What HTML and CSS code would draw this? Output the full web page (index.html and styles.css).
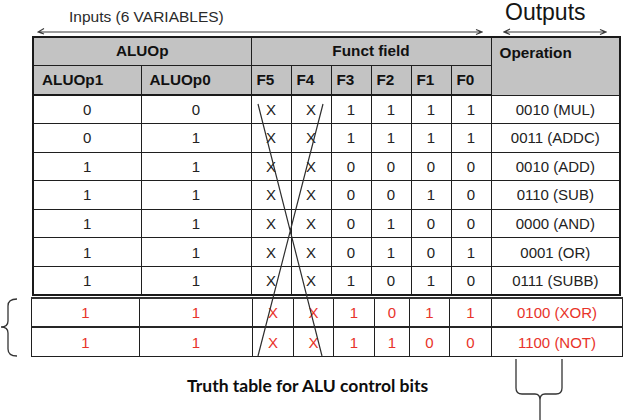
FILE: index.html
```html
<!DOCTYPE html>
<html>
<head>
<meta charset="utf-8">
<title>Truth table for ALU control bits</title>
<link rel="stylesheet" href="styles.css">
</head>
<body>
<div class="top">
  <div class="inputs">
    <div class="inputs-label">Inputs (6 VARIABLES)</div>
    <svg class="arrow" viewBox="0 0 446 10" preserveAspectRatio="none">
      <path d="M1 6H445M7 2.5L1 6L7 8M439 3.5L445 6L439 8.5" />
    </svg>
  </div>
  <div class="outputs">
    <div class="outputs-label">Outputs</div>
    <svg class="arrow" viewBox="0 0 104 10" preserveAspectRatio="none">
      <path d="M1 6H103M7 3L1 6L7 8.5M97 3.5L103 6L97 8.5" />
    </svg>
  </div>
</div>

<table class="truth main">
  <colgroup>
    <col class="w-a"><col class="w-b">
    <col class="w-f"><col class="w-f"><col class="w-f"><col class="w-f"><col class="w-f"><col class="w-f">
    <col class="w-op">
  </colgroup>
  <thead>
    <tr class="h1">
      <th colspan="2" class="center">ALUOp</th>
      <th colspan="6" class="center">Funct field</th>
      <th rowspan="2" class="op-head">Operation</th>
    </tr>
    <tr class="h2">
      <th>ALUOp1</th><th>ALUOp0</th>
      <th>F5</th><th>F4</th><th>F3</th><th>F2</th><th>F1</th><th>F0</th>
    </tr>
  </thead>
  <tbody>
    <tr><td>0</td><td>0</td><td>X</td><td>X</td><td>1</td><td>1</td><td>1</td><td>1</td><td>0010 (MUL)</td></tr>
    <tr><td>0</td><td>1</td><td>X</td><td>X</td><td>1</td><td>1</td><td>1</td><td>1</td><td>0011 (ADDC)</td></tr>
    <tr><td>1</td><td>1</td><td>X</td><td>X</td><td>0</td><td>0</td><td>0</td><td>0</td><td>0010 (ADD)</td></tr>
    <tr><td>1</td><td>1</td><td>X</td><td>X</td><td>0</td><td>0</td><td>1</td><td>0</td><td>0110 (SUB)</td></tr>
    <tr><td>1</td><td>1</td><td>X</td><td>X</td><td>0</td><td>1</td><td>0</td><td>0</td><td>0000 (AND)</td></tr>
    <tr><td>1</td><td>1</td><td>X</td><td>X</td><td>0</td><td>1</td><td>0</td><td>1</td><td>0001 (OR)</td></tr>
    <tr><td>1</td><td>1</td><td>X</td><td>X</td><td>1</td><td>0</td><td>1</td><td>0</td><td>0111 (SUBB)</td></tr>
  </tbody>
</table>

<div class="extra">
  <svg class="brace-left" viewBox="0 0 31 60">
    <path d="M17 2Q8 2 8 9V24Q8 30 1 30Q8 30 8 36V52Q8 59 17 59" />
  </svg>
  <table class="truth added">
    <colgroup>
      <col class="r-a"><col class="r-b"><col class="r-f5"><col class="r-f4"><col class="r-f3">
      <col class="r-f2"><col class="r-f1"><col class="r-f0"><col class="r-op">
    </colgroup>
    <tbody>
      <tr><td>1</td><td>1</td><td>X</td><td>X</td><td>1</td><td>0</td><td>1</td><td>1</td><td>0100 (XOR)</td></tr>
      <tr><td>1</td><td>1</td><td>X</td><td>X</td><td>1</td><td>1</td><td>0</td><td>0</td><td>1100 (NOT)</td></tr>
    </tbody>
  </table>
</div>

<div class="bottom">
  <div class="caption">Truth table for ALU control bits</div>
  <svg class="brace-bottom" viewBox="0 0 70 64">
    <path d="M11 2V31Q11 37 17 37H30Q35 37 35 43V64M57 2V31Q57 37 51 37H40Q35 37 35 43" />
  </svg>
</div>

<svg class="cross" viewBox="0 0 639 420">
  <path d="M258 104L322 356M323 104L258 356" />
</svg>
</body>
</html>
```
FILE: styles.css
```css
* {
  box-sizing: border-box;
}

body {
  margin: 0;
  width: 639px;
  height: 420px;
  overflow: hidden;
  position: relative;
  background: #ffffff;
  font-family: "Liberation Sans", Arial, sans-serif;
  color: #1e1e1e;
}

/* ---------- top labels with arrows ---------- */
.top {
  display: flex;
  height: 36px;
}

.inputs {
  margin-left: 37px;
  width: 446px;
}

.inputs-label {
  height: 26px;
  padding-top: 8px;
  padding-left: 32px;
  font-size: 15.5px;
  line-height: 18px;
  color: #2a2a2a;
}

.outputs {
  margin-left: 20px;
  width: 104px;
}

.outputs-label {
  height: 26px;
  padding-top: 0;
  padding-left: 2px;
  font-size: 23px;
  line-height: 24px;
  color: #151515;
}

.arrow {
  display: block;
  width: 100%;
  height: 10px;
}

.arrow path {
  fill: none;
  stroke: #3a3a3a;
  stroke-width: 1.2;
}

/* ---------- table ---------- */
.truth {
  border-collapse: collapse;
  table-layout: fixed;
}

.main {
  margin-left: 32px;
  width: 587px;
  border: 2px solid #1a1a1a;
}

.w-a { width: 108px; }
.w-b { width: 110px; }
.w-f { width: 40px; }
.w-op { width: 129px; }

.truth th,
.truth td {
  border: 1px solid #1f1f1f;
  padding: 0;
}

.truth th {
  background: #c3c3c3;
  font-size: 15.3px;
  font-weight: bold;
  text-align: left;
  padding-left: 5px;
  color: #111;
}

.truth th.center {
  text-align: center;
  padding-left: 0;
}

.h1 { height: 28px; }
.h2 { height: 30px; }

.h2 th:first-child,
.h2 th:nth-child(2) {
  padding-left: 8px;
}

.truth th.op-head {
  vertical-align: top;
  padding-top: 6px;
  padding-left: 8px;
}

.main thead tr:last-child th {
  border-bottom: 2px solid #1a1a1a;
}

.truth td {
  text-align: center;
  font-size: 15px;
  height: 28.57px;
  color: #222;
}

/* ---------- appended (red) rows ---------- */
.extra {
  display: flex;
  margin-top: 1px;
}

.brace-left {
  width: 31px;
  height: 60px;
  flex: none;
}

.brace-left path,
.brace-bottom path {
  fill: none;
  stroke: #333;
  stroke-width: 1.3;
}

.added {
  width: 591px;
  border: 1.5px solid #333;
  border-top: 2px solid #333;
}

.added td {
  color: #e8332a;
  height: 29.5px;
}

.added tr:first-child td {
  border-bottom: 2px solid #262626;
}

.r-a { width: 108px; }
.r-b { width: 113px; }
.r-f5 { width: 41px; }
.r-f4 { width: 40px; }
.r-f3 { width: 41px; }
.r-f2 { width: 35px; }
.r-f1 { width: 40px; }
.r-f0 { width: 42px; }
.r-op { width: 131px; }

/* ---------- caption ---------- */
.bottom {
  display: flex;
  height: 64px;
}

.caption {
  margin-left: 187px;
  padding-top: 19px;
  font-family: Lato, "Liberation Sans", sans-serif;
  font-weight: bold;
  font-size: 17.5px;
  line-height: 20px;
  color: #0d0d0d;
}

.brace-bottom {
  width: 70px;
  height: 64px;
  margin-left: auto;
  margin-right: 64px;
  flex: none;
}

/* ---------- crossing strokes drawn over the X columns ---------- */
.cross {
  position: absolute;
  left: 0;
  top: 0;
  width: 639px;
  height: 420px;
  pointer-events: none;
}

.cross path {
  fill: none;
  stroke: #2e2e2e;
  stroke-width: 1.2;
}
```
